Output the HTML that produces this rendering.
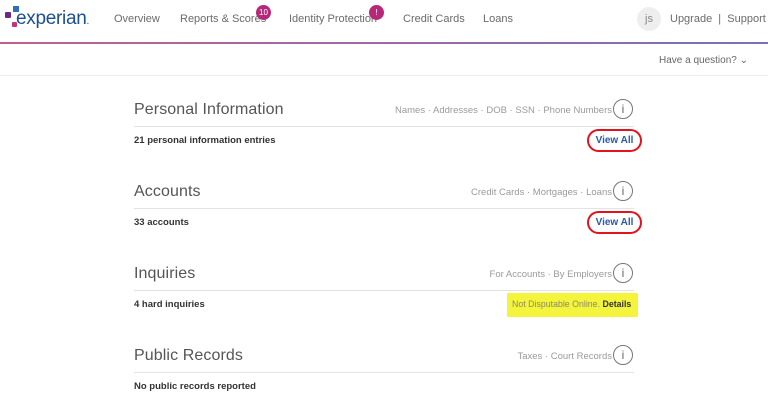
<!DOCTYPE html>
<html><head><style>
body{margin:0;width:768px;height:411px;background:#fff;font-family:"Liberation Sans",sans-serif;position:relative;overflow:hidden;color:#333}
.a{position:absolute;white-space:nowrap}
.nav{font-size:11px;color:#6b6b6b;top:13px}
.badge{position:absolute;width:15px;height:15px;border-radius:50%;background:#b6287a;color:#fff;font-size:8px;text-align:center;line-height:15px}
.t{font-size:16px;color:#555;left:134px;letter-spacing:0.1px}
.sub{font-size:9.5px;color:#9a9a9a;right:156px}
.ic{position:absolute;left:613px;width:18px;height:18px;border:1px solid #777;border-radius:50%;font-size:12px;text-align:center;line-height:18px;color:#666}
.hr{position:absolute;left:134px;width:500px;height:1px;background:#e3e3e3}
.r{font-size:9.5px;font-weight:bold;color:#333;left:134px}
.va{position:absolute;left:587px;width:51px;height:19px;border:2.5px solid #e0141e;border-radius:13px;font-size:10px;font-weight:bold;color:#2a5aa8;text-align:center;line-height:19px}
</style></head><body>
<div class="a" style="top:6px;width:6px;height:6px;background:#2f6fb5;left:13px"></div>
<div class="a" style="left:5px;top:12px;width:6px;height:6px;background:#6a2a8a;border-radius:1px"></div>
<div class="a" style="left:12px;top:22px;width:5px;height:5px;background:#c4317c;border-radius:1px"></div>
<div class="a" style="left:16px;top:8px;font-size:19px;color:#1d4f91;letter-spacing:-0.3px">experian<span style="font-size:10px">.</span></div>
<div class="a nav" style="left:114px">Overview</div>
<div class="a nav" style="left:180px">Reports &amp; Scores</div>
<div class="badge" style="left:256px;top:5px">10</div>
<div class="a nav" style="left:289px">Identity Protection</div>
<div class="badge" style="left:369px;top:5px">!</div>
<div class="a nav" style="left:403px">Credit Cards</div>
<div class="a nav" style="left:483px">Loans</div>
<div class="a" style="left:637px;top:7px;width:24px;height:24px;border-radius:50%;background:#eee;color:#888;font-size:11px;text-align:center;line-height:24px">js</div>
<div class="a nav" style="left:670px">Upgrade &nbsp;| &nbsp;Support</div>
<div class="a" style="left:0;top:42px;width:768px;height:1.5px;background:linear-gradient(90deg,#c06090,#7a70b8)"></div>
<div class="a" style="right:20px;top:55px;font-size:10px;color:#666">Have a question? <span style="font-size:10px">&#8964;</span></div>
<div class="a" style="left:0;top:75px;width:768px;height:1px;background:#ececec"></div>

<div class="a t" style="top:101px">Personal Information</div>
<div class="a sub" style="top:105px">Names · Addresses · DOB · SSN · Phone Numbers</div>
<div class="ic" style="top:99px">i</div>
<div class="hr" style="top:126px"></div>
<div class="a r" style="top:135px">21 personal information entries</div>
<div class="va" style="top:129px">View All</div>

<div class="a t" style="top:183px">Accounts</div>
<div class="a sub" style="top:187px">Credit Cards · Mortgages · Loans</div>
<div class="ic" style="top:181px">i</div>
<div class="hr" style="top:208px"></div>
<div class="a r" style="top:217px">33 accounts</div>
<div class="va" style="top:211px">View All</div>

<div class="a t" style="top:265px">Inquiries</div>
<div class="a sub" style="top:269px">For Accounts · By Employers</div>
<div class="ic" style="top:263px">i</div>
<div class="hr" style="top:290px"></div>
<div class="a r" style="top:299px">4 hard inquiries</div>
<div class="a" style="left:507px;top:293px;width:131px;height:24px;background:#f4f43c"></div>
<div class="a" style="left:512px;top:299px;font-size:8.8px;color:#8a8a6a">Not Disputable Online. <b style="color:#333">Details</b></div>

<div class="a t" style="top:347px">Public Records</div>
<div class="a sub" style="top:351px">Taxes · Court Records</div>
<div class="ic" style="top:345px">i</div>
<div class="hr" style="top:372px"></div>
<div class="a r" style="top:381px">No public records reported</div>
</body></html>
